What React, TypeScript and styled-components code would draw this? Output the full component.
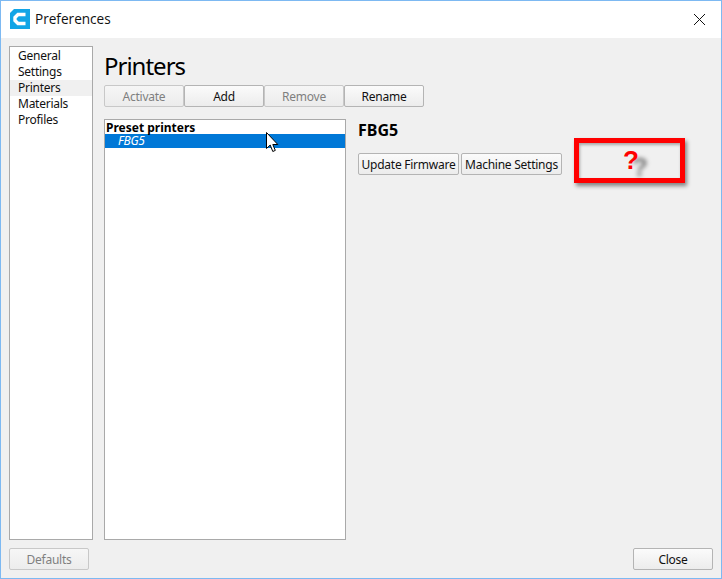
import React from "react";
import styled, { createGlobalStyle } from "styled-components";

const Global = createGlobalStyle`
  html, body { margin: 0; padding: 0; background: #f0f0f0; }
  body { font-family: "Noto Sans", "Open Sans", sans-serif; font-size: 12px; letter-spacing: -0.25px; color: #000; }
`;

const Window = styled.div`
  position: relative;
  box-sizing: border-box;
  width: 722px;
  height: 579px;
  border: 1px solid #7db9f2;
  display: flex;
  flex-direction: column;
  background: #f0f0f0;
  overflow: hidden;
`;

const TitleBar = styled.header`
  height: 37px;
  flex: none;
  background: #fff;
  display: flex;
  align-items: center;
  padding: 0 0 2px 9px;
  box-sizing: border-box;
`;

const AppTitle = styled.span`
  font-family: "Open Sans", "Noto Sans", sans-serif;
  font-size: 13.6px;
  letter-spacing: 0;
  margin-left: 5px;
  color: #111;
`;

const CloseX = styled.svg`
  margin-left: auto;
  margin-right: 15px;
  margin-top: 2px;
`;

const Body = styled.div`
  flex: 1;
  display: flex;
  flex-direction: column;
  padding: 8px 8px 8px 8px;
  min-height: 0;
`;

const Main = styled.div`
  flex: 1;
  display: flex;
  gap: 11px;
  min-height: 0;
`;

const Sidebar = styled.ul`
  list-style: none;
  margin: 0;
  padding: 1px 0 0;
  width: 84px;
  box-sizing: border-box;
  background: #fff;
  border: 1px solid #a9a9a9;
`;

const NavItem = styled.li<{ $active?: boolean }>`
  height: 16px;
  line-height: 16px;
  padding-left: 8px;
  background: ${(p) => (p.$active ? "#f0f0f0" : "transparent")};
  color: #111;
`;

const Content = styled.section`
  flex: 1;
  display: flex;
  flex-direction: column;
  min-width: 0;
`;

const Heading = styled.h1`
  margin: 0;
  height: 39px;
  font-size: 24px;
  font-weight: 400;
  letter-spacing: -1px;
  line-height: 39px;
  font-family: "Noto Sans", sans-serif;
`;

const Toolbar = styled.div`
  display: flex;
  height: 22px;
  margin-bottom: 12px;
`;

const Button = styled.button<{ $w?: number }>`
  box-sizing: border-box;
  width: ${(p) => p.$w ?? 80}px;
  height: 22px;
  padding: 0;
  border: 1px solid #b4b4b4;
  border-radius: 2px;
  background: linear-gradient(#fbfbfb, #ececec);
  font: inherit;
  letter-spacing: inherit;
  color: #111;
  &:disabled { color: #7f7f7f; border-color: #c8c8c8; background: linear-gradient(#f6f6f6, #ececec); }
`;

const Split = styled.div`
  flex: 1;
  display: flex;
  gap: 12px;
  min-height: 0;
`;

const PrinterList = styled.div`
  width: 242px;
  box-sizing: border-box;
  background: #fff;
  border: 1px solid #a9a9a9;
`;

const GroupLabel = styled.div`
  height: 14px;
  line-height: 15px;
  padding-left: 1px;
  font-size: 12px;
  letter-spacing: 0;
  font-weight: 700;
`;

const PrinterRow = styled.div`
  height: 14px;
  line-height: 14px;
  padding-left: 13px;
  background: #0078d7;
  color: #fff;
  font-style: italic;
`;

const Detail = styled.div`
  flex: 1;
  display: flex;
  flex-direction: column;
`;

const DetailName = styled.h2`
  margin: 0 0 12px;
  height: 22px;
  line-height: 22px;
  font-size: 16px;
  letter-spacing: 0;
  font-weight: 700;
`;

const DetailActions = styled.div`
  display: flex;
  gap: 2px;
`;

const Footer = styled.footer`
  display: flex;
  justify-content: space-between;
  margin-top: 8px;
`;

const Callout = styled.div`
  position: absolute;
  left: 573px;
  top: 137px;
  width: 111px;
  height: 45px;
  box-sizing: border-box;
  border: 5px solid #ff0000;
  box-shadow: 2px 3px 4px rgba(0, 0, 0, 0.45), inset 1px 2px 3px rgba(0, 0, 0, 0.3);
  display: flex;
  justify-content: center;
  align-items: center;
`;

const Question = styled.span`
  color: #ff0000;
  font-family: "Liberation Sans", sans-serif;
  font-size: 26px;
  font-weight: 700;
  letter-spacing: 0;
  line-height: 1;
  margin-top: -1px;
  margin-left: 3px;
  text-shadow: 9px 7px 4px rgba(0, 0, 0, 0.5);
`;

const Cursor = styled.svg`
  position: absolute;
  left: 265px;
  top: 131px;
`;

export default function App() {
  return (
    <>
      <Global />
      <Window>
        <TitleBar>
          <svg width="20" height="20" viewBox="0 0 20 20">
            <path d="M4 0H20V20H0V4Z" fill="#12a5e6" />
            <path d="M15.5 5.5H8L5 8.5V11.5L8 14.5H15.5" fill="none" stroke="#fff" strokeWidth="3.4" />
          </svg>
          <AppTitle>Preferences</AppTitle>
          <CloseX width="13" height="13" viewBox="0 0 13 13">
            <path d="M1 1L12 12M12 1L1 12" stroke="#111" strokeWidth="1" fill="none" />
          </CloseX>
        </TitleBar>
        <Body>
          <Main>
            <Sidebar>
              <NavItem>General</NavItem>
              <NavItem>Settings</NavItem>
              <NavItem $active>Printers</NavItem>
              <NavItem>Materials</NavItem>
              <NavItem>Profiles</NavItem>
            </Sidebar>
            <Content>
              <Heading>Printers</Heading>
              <Toolbar>
                <Button disabled>Activate</Button>
                <Button>Add</Button>
                <Button disabled>Remove</Button>
                <Button>Rename</Button>
              </Toolbar>
              <Split>
                <PrinterList>
                  <GroupLabel>Preset printers</GroupLabel>
                  <PrinterRow>FBG5</PrinterRow>
                </PrinterList>
                <Detail>
                  <DetailName>FBG5</DetailName>
                  <DetailActions>
                    <Button $w={101}>Update Firmware</Button>
                    <Button $w={101}>Machine Settings</Button>
                  </DetailActions>
                </Detail>
              </Split>
            </Content>
          </Main>
          <Footer>
            <Button disabled>Defaults</Button>
            <Button>Close</Button>
          </Footer>
        </Body>
        <Callout>
          <Question>?</Question>
        </Callout>
        <Cursor width="13" height="21" viewBox="0 0 13 21">
          <path d="M0.5 0.5V16.5L4.2 13L6.8 19.5L9.3 18.4L6.8 12.5H11.8Z" fill="#fff" stroke="#000" strokeWidth="1" />
        </Cursor>
      </Window>
    </>
  );
}
